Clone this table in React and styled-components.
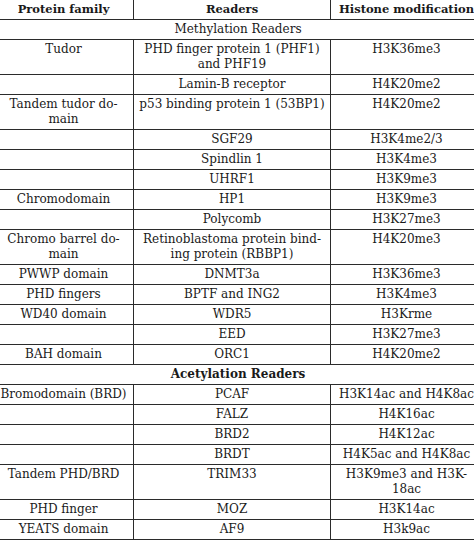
import styled, { createGlobalStyle } from 'styled-components';

const GlobalStyle = createGlobalStyle`
    html, body {
        margin: 0;
        padding: 0;
        background: #fff;
        overflow: hidden;
    }
`

const rows = [
    { section: 'Methylation Readers' },
    { family: 'Tudor', readers: ['PHD finger protein 1 (PHF1)', 'and PHF19'], mark: 'H3K36me3' },
    { family: '', readers: 'Lamin-B receptor', mark: 'H4K20me2' },
    { family: ['Tandem tudor do-', 'main'], readers: 'p53 binding protein 1 (53BP1)', mark: 'H4K20me2' },
    { family: '', readers: 'SGF29', mark: 'H3K4me2/3' },
    { family: '', readers: 'Spindlin 1', mark: 'H3K4me3' },
    { family: '', readers: 'UHRF1', mark: 'H3K9me3' },
    { family: 'Chromodomain', readers: 'HP1', mark: 'H3K9me3' },
    { family: '', readers: 'Polycomb', mark: 'H3K27me3' },
    { family: ['Chromo barrel do-', 'main'], readers: ['Retinoblastoma protein bind-', 'ing protein (RBBP1)'], mark: 'H4K20me3' },
    { family: 'PWWP domain', readers: 'DNMT3a', mark: 'H3K36me3' },
    { family: 'PHD fingers', readers: 'BPTF and ING2', mark: 'H3K4me3' },
    { family: 'WD40 domain', readers: 'WDR5', mark: 'H3Krme' },
    { family: '', readers: 'EED', mark: 'H3K27me3' },
    { family: 'BAH domain', readers: 'ORC1', mark: 'H4K20me2' },
    { section: 'Acetylation Readers', bold: true },
    { family: 'Bromodomain (BRD)', readers: 'PCAF', mark: 'H3K14ac and H4K8ac' },
    { family: '', readers: 'FALZ', mark: 'H4K16ac' },
    { family: '', readers: 'BRD2', mark: 'H4K12ac' },
    { family: '', readers: 'BRDT', mark: 'H4K5ac and H4K8ac' },
    { family: 'Tandem PHD/BRD', readers: 'TRIM33', mark: ['H3K9me3 and H3K-', '18ac'] },
    { family: 'PHD finger', readers: 'MOZ', mark: 'H3K14ac' },
    { family: 'YEATS domain', readers: 'AF9', mark: 'H3k9ac' },
];

// keeps the line breaks of the original figure
const Lines = ({ value }) => {
    if (!Array.isArray(value)) return value;
    return value.map((line, i) => (
        <span key={i}>{i > 0 && <br />}{line}</span>
    ));
}

const App = () => {
    return (
        <>
            <GlobalStyle />
            <Page>
                <Table>
                    <colgroup>
                        <col style={{ width: 140 }} />
                        <col style={{ width: 197 }} />
                        <col style={{ width: 152 }} />
                    </colgroup>
                    <thead>
                        <tr>
                            <HeadCell>Protein family</HeadCell>
                            <HeadCell>Readers</HeadCell>
                            <HeadCell>Histone modification</HeadCell>
                        </tr>
                    </thead>
                    <tbody>
                        {rows.map((row, i) => row.section ? (
                            <tr key={i}>
                                <SectionCell colSpan={3} $bold={row.bold}>{row.section}</SectionCell>
                            </tr>
                        ) : (
                            <tr key={i}>
                                <Cell><Lines value={row.family} /></Cell>
                                <Cell><Lines value={row.readers} /></Cell>
                                <Cell><Lines value={row.mark} /></Cell>
                            </tr>
                        ))}
                    </tbody>
                </Table>
            </Page>
        </>
    )
};

const Page = styled.div`
    width: 474px;
    height: 541px;
    overflow: hidden;
    background: #fff;
`

const Table = styled.table`
    table-layout: fixed;
    border-collapse: collapse;
    width: 489px;
    margin-left: -7px;
    font-family: "DejaVu Serif", "Liberation Serif", serif;
    font-size: 12px;
    line-height: 15px;
    color: #1a1a1a;
`

const Cell = styled.td`
    padding: 2px 2px;
    text-align: center;
    vertical-align: top;
    white-space: nowrap;
    overflow: visible;
    border: 1px solid #2b2b2b;
`

const HeadCell = styled.th`
    padding: 2px 2px;
    text-align: center;
    font-size: 11.5px;
    font-weight: bold;
    white-space: nowrap;
    border: 1px solid #2b2b2b;
    border-top: none;
`

const SectionCell = styled.td`
    padding: 2px 2px;
    text-align: center;
    font-weight: ${p => p.$bold ? 'bold' : 'normal'};
    border: 1px solid #2b2b2b;
`

export default App;
